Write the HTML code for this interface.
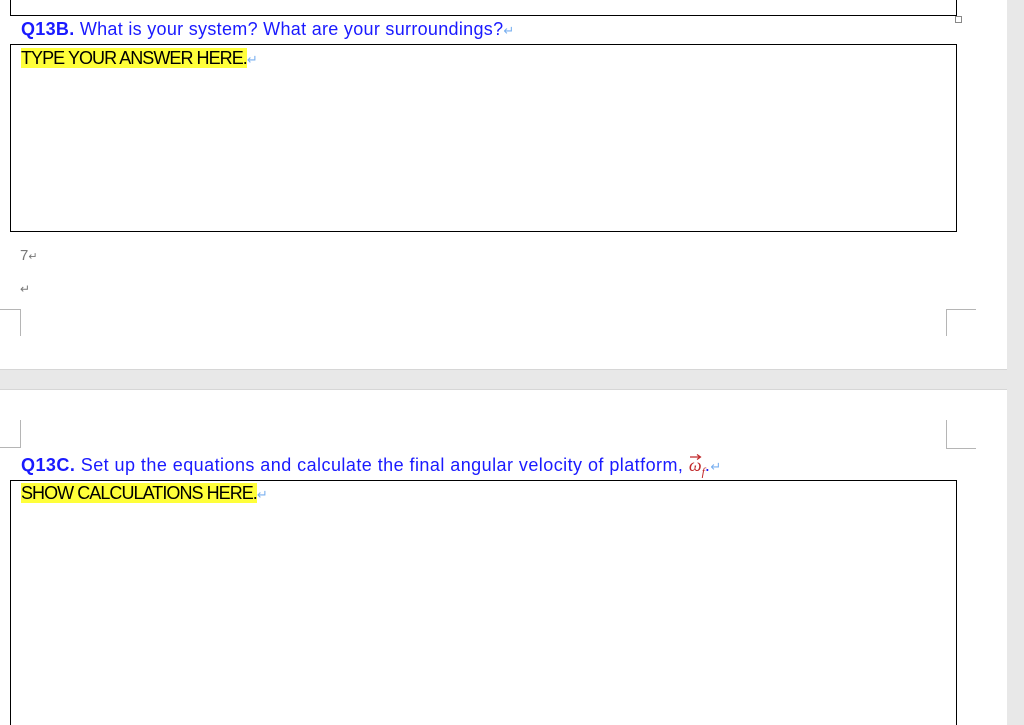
<!DOCTYPE html>
<html><head><style>
html,body{margin:0;width:1024px;height:725px;overflow:hidden}
body{background:#e8e8e8;position:relative;font-family:"Liberation Sans",sans-serif}
.pg{position:absolute;left:0;width:1007px;background:#fff}
.a{position:absolute;box-sizing:border-box}
.t{position:absolute;font-size:18px;color:#1a1aff;white-space:nowrap;letter-spacing:0.3px;line-height:22px}
.hl{background:#ffff3a;color:#000;letter-spacing:-0.95px}
.ret{color:#7ab0f0;font-size:13px}
.g{background:#b5b5b5;position:absolute}
</style></head><body>
<div class="pg" style="top:0;height:369px;border-bottom:1px solid #d6d6d6"></div>
<div class="pg" style="top:389px;height:340px;border-top:1px solid #d6d6d6"></div>

<div class="a" style="left:10px;top:-2px;width:947px;height:18px;border:1px solid #000;border-top:none"></div>
<div class="a" style="left:955px;top:16px;width:7px;height:7px;border:1px solid #888"></div>
<div class="t" style="left:21px;top:18px"><b>Q13B.</b> What is your system? What are your surroundings?<span class="ret">↵</span></div>
<div class="a" style="left:10px;top:44px;width:947px;height:188px;border:1px solid #000"></div>
<div class="t" style="left:21px;top:47px;color:#000"><span class="hl">TYPE YOUR ANSWER HERE.</span><span class="ret">↵</span></div>

<div class="t" style="left:20px;top:245px;color:#777;font-size:15px;letter-spacing:0">7<span style="font-size:11px">↵</span></div>
<div class="t" style="left:20px;top:278px;color:#777;font-size:12px;letter-spacing:0">↵</div>

<div class="g" style="left:0;top:309px;width:20px;height:1px"></div>
<div class="g" style="left:20px;top:309px;width:1px;height:27px"></div>
<div class="g" style="left:946px;top:309px;width:30px;height:1px"></div>
<div class="g" style="left:946px;top:309px;width:1px;height:27px"></div>
<div class="g" style="left:20px;top:420px;width:1px;height:28px"></div>
<div class="g" style="left:0;top:447px;width:21px;height:1px"></div>
<div class="g" style="left:946px;top:420px;width:1px;height:28px"></div>
<div class="g" style="left:946px;top:448px;width:30px;height:1px"></div>

<div class="t" style="left:21px;top:454px;letter-spacing:0.45px"><b>Q13C.</b> Set up the equations and calculate the final angular velocity of platform, <span style="position:relative;display:inline-block;color:#c0282a;font-family:'Liberation Serif',serif;font-style:italic;letter-spacing:0">ω<svg style="position:absolute;left:1px;top:0" width="12" height="6" viewBox="0 0 12 6"><path d="M0 3H10M7 0.5L10.5 3L7 5.5" stroke="#c0282a" stroke-width="1.2" fill="none"/></svg><sub style="font-size:12px">f</sub></span>.<span class="ret">↵</span></div>
<div class="a" style="left:10px;top:480px;width:947px;height:260px;border:1px solid #000"></div>
<div class="t" style="left:21px;top:482px;color:#000"><span class="hl">SHOW CALCULATIONS HERE.</span><span class="ret">↵</span></div>
</body></html>
